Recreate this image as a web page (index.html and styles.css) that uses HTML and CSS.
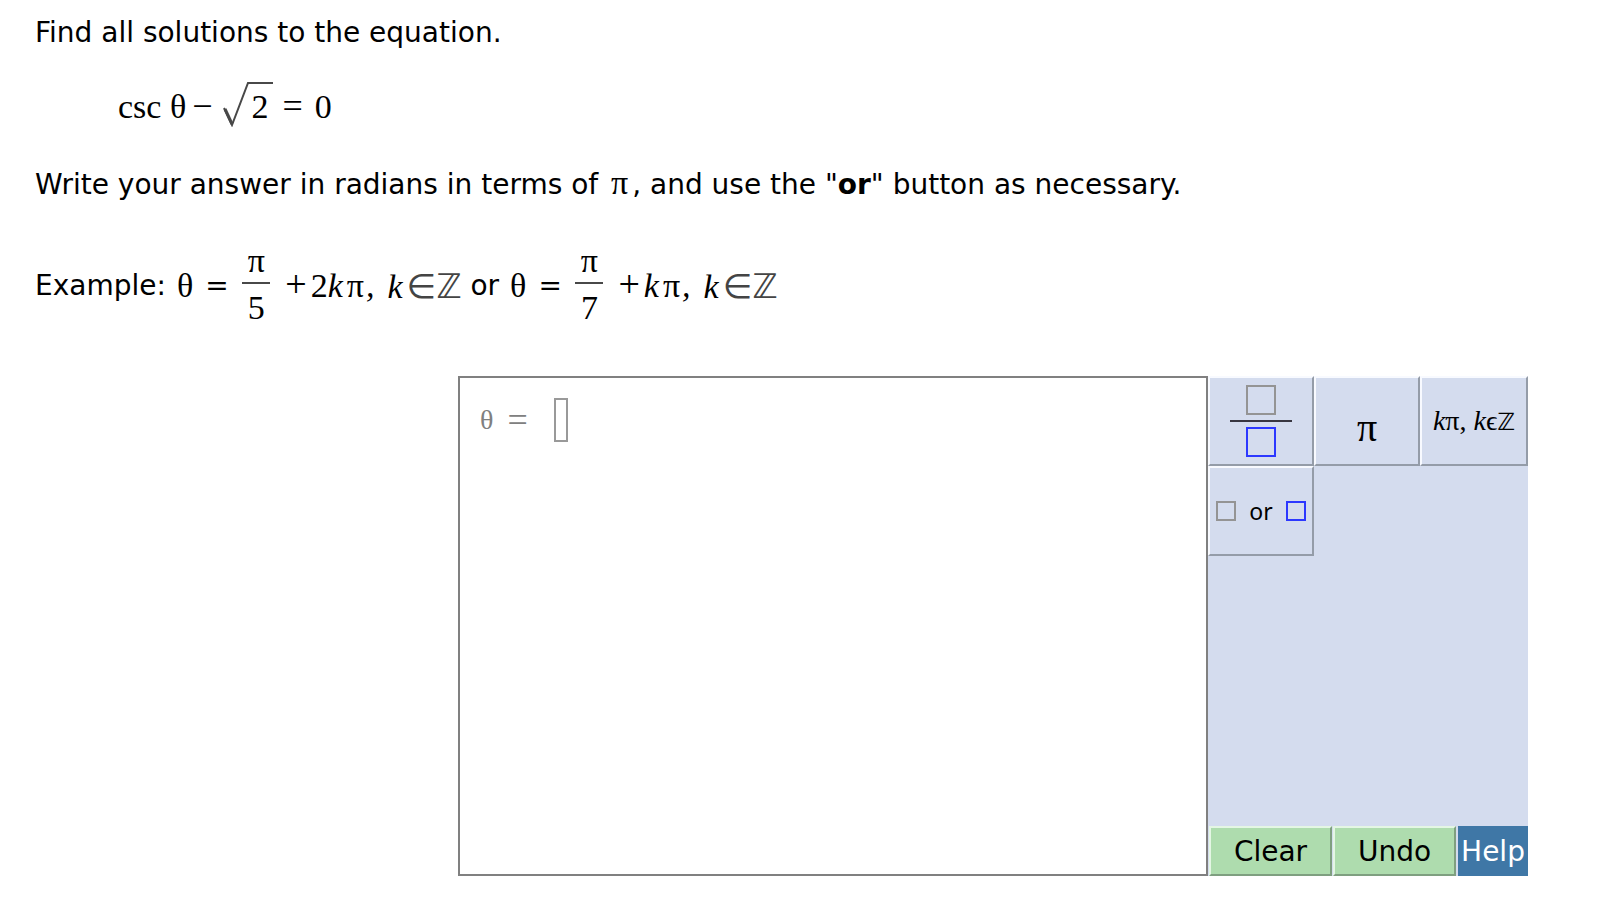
FILE: index.html
```
<!DOCTYPE html>
<html lang="en">
<head>
  <meta charset="UTF-8">
  <meta name="viewport" content="width=device-width, initial-scale=1.0">
  <title>Trigonometric equations</title>
  <link rel="stylesheet" href="styles.css">
</head>
<body>

  <main class="question">
    <p class="line">Find all solutions to the equation.</p>

    <div class="equation math">
      <span>csc θ</span>
      <span class="minus">−</span>
      <span class="root">
        <svg class="radical" width="29" height="46" viewBox="0 0 29 46" aria-hidden="true">
          <path d="M1 27 L9 44 L25 2 H29" fill="none" stroke="#484848" stroke-width="2"/>
          <path d="M2 28 L9 43" fill="none" stroke="#484848" stroke-width="3"/>
        </svg>
        <span class="radicand">2</span>
      </span>
      <span class="equals">=</span>
      <span>0</span>
    </div>

    <p class="line">Write your answer in radians in terms of <span class="math">π</span>, and use the "<b>or</b>" button as necessary.</p>

    <div class="example">
      <span>Example:</span>
      <span class="math theta">θ</span>
      <span class="eq">=</span>
      <span class="math fraction"><span class="num">π</span><span class="den">5</span></span>
      <span class="math term"><span class="plus">+</span>2<i>k</i><span class="pi">π</span><i>,</i></span>
      <span class="math set"><i>k</i><span class="symbol">∈ℤ</span></span>
      <span>or</span>
      <span class="math theta">θ</span>
      <span class="eq">=</span>
      <span class="math fraction"><span class="num">π</span><span class="den">7</span></span>
      <span class="math term"><span class="plus">+</span><i>k</i><span class="pi">π</span><i>,</i></span>
      <span class="math set"><i>k</i><span class="symbol">∈ℤ</span></span>
    </div>
  </main>

  <section class="answer">
    <div class="editor">
      <label class="prefix" for="answerInput"><span>θ</span><span class="prefix-eq">=</span></label>
      <input class="slot" id="answerInput" type="text" autocomplete="off">
    </div>

    <div class="palette">
      <div class="keys">
        <button type="button" class="key frac-key" aria-label="fraction">
          <span class="box"></span>
          <span class="bar"></span>
          <span class="box blue"></span>
        </button>
        <button type="button" class="key pi-key">π</button>
        <button type="button" class="key set-key"><i>k</i>π, <i>k</i>ϵ<span class="integers">ℤ</span></button>
        <button type="button" class="key or-key">
          <span class="box small"></span>
          <span>or</span>
          <span class="box small blue"></span>
        </button>
      </div>
      <div class="actions">
        <button type="button" class="action" id="clearButton">Clear</button>
        <button type="button" class="action">Undo</button>
        <button type="button" class="help">Help</button>
      </div>
    </div>
  </section>

  <script>
    const answerInput = document.getElementById("answerInput");
    document.getElementById("clearButton").addEventListener("click", () => {
      answerInput.value = "";
    });
  </script>

</body>
</html>
```
FILE: styles.css
```
* {
  box-sizing: border-box;
}

body {
  margin: 0;
  background: #fff;
  color: #000;
  font-family: "DejaVu Sans", Verdana, sans-serif;
  font-size: 28px;
}

.question {
  padding: 15px 35px 0;
}

.line {
  margin: 0;
  line-height: 36px;
}

.math {
  font-family: "Liberation Serif", "Times New Roman", serif;
  font-size: 34px;
}

.line .math {
  margin: 0 4px;
  line-height: 1;
}

/* equation */
.equation {
  display: flex;
  align-items: baseline;
  height: 46px;
  margin: 30px 0 39px 83px;
  line-height: 46px;
}

.minus {
  margin: 0 10px 0 6px;
  font-size: 36px;
}

.root {
  display: flex;
  align-items: baseline;
}

.radical {
  align-self: flex-start;
}

.radicand {
  height: 44px;
  margin-top: 1px;
  padding-right: 4px;
  border-top: 2px solid #484848;
}

.equals {
  margin: 0 12px 0 10px;
  font-size: 36px;
}

/* example */
.example {
  display: flex;
  align-items: center;
  height: 86px;
  margin-top: 40px;
  line-height: 46px;
}

.theta {
  margin-left: 11px;
}

.eq {
  width: 23px;
  margin: 0 14px 0 12px;
}

.fraction {
  display: flex;
  flex-direction: column;
  width: 28px;
  padding-bottom: 3px;
  text-align: center;
  line-height: 36px;
}

.num {
  padding-bottom: 3px;
}

.den {
  padding-top: 6px;
  border-top: 2px solid #484848;
}

.term {
  margin-left: 15px;
}

.plus {
  margin-right: 4px;
  font-size: 38px;
  line-height: 1;
}

.pi {
  margin: 0 2px 0 4px;
}

.set {
  margin: 0 9px 0 13px;
}

.symbol {
  margin-left: 4px;
  color: #444;
  font-family: "DejaVu Sans", sans-serif;
  font-size: 34px;
}

/* answer area */
.answer {
  display: flex;
  height: 500px;
  margin: 47px 90px 28px 458px;
}

.editor {
  display: flex;
  flex: 1;
  align-items: flex-start;
  padding: 20px;
  border: 2px solid #808080;
}

.prefix {
  display: flex;
  gap: 14px;
  height: 44px;
  color: #808080;
  font: 28px/44px "Liberation Serif", serif;
}

.prefix-eq {
  font-size: 36px;
}

.slot {
  width: 14px;
  height: 44px;
  margin-left: 26px;
  padding: 0;
  border: 2px solid #999;
  outline: none;
  background: transparent;
}

.palette {
  display: flex;
  flex-direction: column;
  justify-content: space-between;
  width: 320px;
  background: #d4dcee;
}

.keys {
  display: grid;
  grid-template-columns: 106px 106px 108px;
  grid-auto-rows: 90px;
}

button {
  padding: 0;
  border: 2px solid;
  color: #000;
  font-family: inherit;
  font-size: 28px;
  cursor: pointer;
}

.key {
  display: flex;
  align-items: center;
  justify-content: center;
  border-color: #f8faff #949ca8 #949ca8 #f8faff;
  background: #d4dcee;
}

.frac-key {
  flex-direction: column;
  gap: 5px;
}

.box {
  width: 30px;
  height: 30px;
  border: 2px solid #949494;
}

.blue {
  border-color: #2c38ff;
}

.bar {
  width: 62px;
  height: 2px;
  background: #383640;
}

.small {
  width: 20px;
  height: 20px;
}

.pi-key {
  padding-top: 12px;
  font-family: "Liberation Serif", serif;
  font-size: 40px;
}

.set-key {
  display: block;
  font-family: "Liberation Serif", "DejaVu Serif", serif;
  font-size: 28px;
}

.integers {
  font-family: "DejaVu Sans", sans-serif;
  font-size: 24px;
}

.or-key {
  gap: 13px;
  font-family: "Noto Sans", sans-serif;
  font-size: 23px;
}

.actions {
  display: flex;
  gap: 1px;
  height: 50px;
  padding-left: 1px;
}

.action {
  flex: 1;
  border-color: #e4f6e4 #7f9f80 #7f9f80 #e4f6e4;
  background: #aedcae;
}

.help {
  width: 70px;
  margin-left: 1px;
  border: none;
  background: #3f77a6;
  color: #fff;
}
```
